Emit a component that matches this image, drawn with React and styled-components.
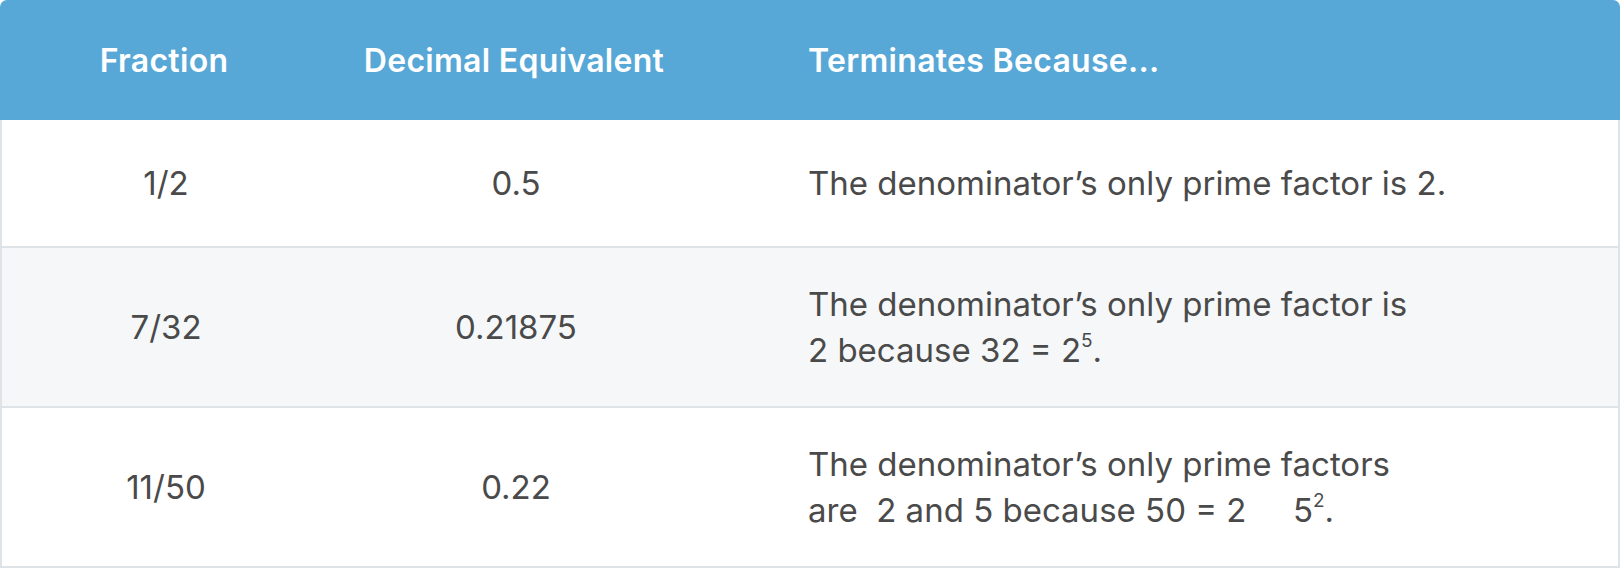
import React from 'react';
import styled, { createGlobalStyle } from 'styled-components';

const GlobalStyle = createGlobalStyle`
  html, body {
    margin: 0;
    padding: 0;
    background: #fff;
  }
  body {
    font-family: Inter, Lato, sans-serif;
  }
`;

const Table = styled.div`
  width: 1620px;
  display: flex;
  flex-direction: column;
`;

const HeaderRow = styled.div`
  display: grid;
  grid-template-columns: 328px 372px 1fr;
  height: 120px;
  align-items: center;
  background: #57a8d7;
  border-radius: 7px 7px 0 0;
`;

const Th = styled.div`
  color: #fff;
  font-size: 32px;
  font-weight: 600;
  letter-spacing: 0.3px;
  text-align: ${p => (p.$left ? 'left' : 'center')};
  padding-left: ${p => (p.$left ? '108px' : '0')};
`;

const Row = styled.div`
  display: grid;
  grid-template-columns: 328px 372px 1fr;
  align-items: center;
  height: ${p => p.$h}px;
  box-sizing: border-box;
  background: ${p => (p.$shade ? '#f5f7f9' : '#fff')};
  border-left: 2px solid #dde3e7;
  border-right: 2px solid #dde3e7;
  border-bottom: 2px solid #dde3e7;
`;

const Td = styled.div`
  color: #4a4a4a;
  font-size: 33px;
  line-height: 46px;
  text-align: ${p => (p.$left ? 'left' : 'center')};
  padding-left: ${p => (p.$left ? '106px' : '0')};
  white-space: pre;
`;

const Sup = styled.sup`
  font-size: 19px;
  line-height: 0;
  vertical-align: 15px;
`;

const rows = [
  {
    fraction: '1/2',
    decimal: '0.5',
    h: 128,
    reason: <>The denominator’s only prime factor is 2.</>,
  },
  {
    fraction: '7/32',
    decimal: '0.21875',
    h: 160,
    shade: true,
    reason: (
      <>
        The denominator’s only prime factor is
        <br />
        2 because 32 = 2<Sup>5</Sup>.
      </>
    ),
  },
  {
    fraction: '11/50',
    decimal: '0.22',
    h: 160,
    reason: (
      <>
        The denominator’s only prime factors
        <br />
        {'are  2 and 5 because 50 = 2     5'}<Sup>2</Sup>.
      </>
    ),
  },
];

export default function App() {
  return (
    <>
      <GlobalStyle />
      <Table>
        <HeaderRow>
          <Th>Fraction</Th>
          <Th>Decimal Equivalent</Th>
          <Th $left>Terminates Because...</Th>
        </HeaderRow>
        {rows.map(r => (
          <Row key={r.fraction} $h={r.h} $shade={r.shade}>
            <Td>{r.fraction}</Td>
            <Td>{r.decimal}</Td>
            <Td $left>{r.reason}</Td>
          </Row>
        ))}
      </Table>
    </>
  );
}
